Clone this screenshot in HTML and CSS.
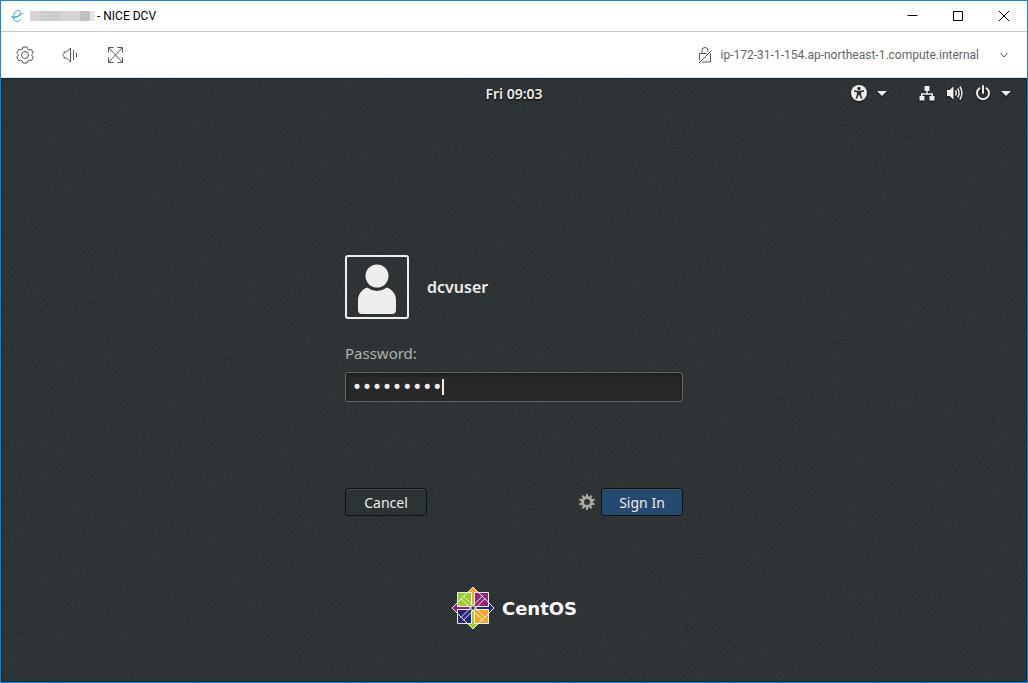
FILE: index.html
```
<!DOCTYPE html>
<html lang="en">
<head>
    <meta charset="UTF-8">
    <meta name="viewport" content="width=device-width, initial-scale=1.0">
    <title>NICE DCV</title>
    <link rel="stylesheet" href="styles.css">
</head>
<body>
    <header class="titlebar">
        <svg class="app-icon" viewBox="0 0 14 14" width="14" height="14">
            <path d="M3 8.5C7 8 10 6 9.5 3.5C9 .5 4.500.5 3 5C1.500 9.500 3.500 13 6.500 12.500C8 12.200 9 11.200 9.500 10M0 7.500C2 9 7 8 12.500 4"/>
        </svg>
        <span class="masked-name"><i></i><i></i><i></i><i></i><i></i></span>
        <span class="title">- NICE DCV</span>
        <div class="window-buttons">
            <button type="button" aria-label="Minimize"><svg viewBox="0 0 11 11" width="11" height="11"><path d="M.5 4.500h10"/></svg></button>
            <button type="button" aria-label="Maximize"><svg viewBox="0 0 11 11" width="11" height="11"><path d="M.5.5h9v9h-9z"/></svg></button>
            <button type="button" aria-label="Close"><svg viewBox="0 0 11 11" width="11" height="11"><path d="M0 0l10 10M10 0L0 10"/></svg></button>
        </div>
    </header>

    <nav class="toolbar">
        <button type="button" aria-label="Settings">
            <svg viewBox="0 0 18 18" width="18" height="18">
                <path d="M7 1h4l.8 2 1.400.8 2.100-.4 2 3.500-1.400 1.600v1l1.400 1.600-2 3.500-2.100-.4-1.400.8L11 17H7l-.8-2-1.400-.8-2.100.4-2-3.500 1.400-1.600v-1L.7 6.900l2-3.500 2.100.4L6.200 3z"/>
                <circle cx="9" cy="9" r="3.500"/>
            </svg>
        </button>
        <button type="button" aria-label="Sound">
            <svg viewBox="0 0 18 18" width="18" height="18">
                <path d="M3 6h2.500L9.500 2v14l-4-4H3V10.500L2 9.500v-1L3 7.500zM12.500 4v10M15.500 6.500v5"/>
            </svg>
        </button>
        <button type="button" aria-label="Fullscreen">
            <svg viewBox="0 0 18 18" width="18" height="18">
                <path d="M2.500 6.500v-5h5M11.500 1.500h5v5M16.500 11.500v5h-5M7.500 16.500h-5v-5M2.500 1.500l14 15M16.500 1.500l-14 15"/>
            </svg>
        </button>
        <div class="connection">
            <svg viewBox="0 0 16 18" width="16" height="18">
                <path d="M2.500 7.500h11v8.500h-11zM5 7.500V4.500a3 3 0 0 1 6 0v3"/>
                <path class="halo" d="M2 17L14.500 4.500"/>
                <path class="slash" d="M2 17L14.500 4.500"/>
            </svg>
            <span>ip-172-31-1-154.ap-northeast-1.compute.internal</span>
            <button type="button" aria-label="Connection menu"><svg viewBox="0 0 8 6" width="8" height="6"><path d="M.5 1L4 5 7.500 1"/></svg></button>
        </div>
    </nav>

    <main class="screen">
        <svg class="grain" aria-hidden="true">
            <filter id="grain" x="0" y="0" width="100%" height="100%">
                <feTurbulence type="fractalNoise" baseFrequency="0.7" numOctaves="2" seed="4"/>
                <feColorMatrix values="0 0 0 0 0.8  0 0 0 0 0.85  0 0 0 0 0.85  0.5 0.5 0 0 -0.42"/>
            </filter>
            <rect width="100%" height="100%" filter="url(#grain)"/>
        </svg>

        <div class="panel">
            <time class="clock">Fri 09:03</time>
            <div class="tray">
                <button type="button" aria-label="Accessibility">
                    <svg viewBox="0 0 16 16" width="16" height="16">
                        <circle cx="8" cy="8" r="8"/>
                        <circle class="cut" cx="8" cy="3.500" r="1.700"/>
                        <path class="cut" d="M3 5l3.800.8h2.400L13 5v1.500l-3 1 .3 2.500 1.200 3.800H10L8.300 10h-.6L6 13.800H4.500L5.700 10 6 7.500l-3-1z"/>
                    </svg>
                    <svg viewBox="0 0 10 5" width="10" height="5"><path d="M0 0h10L5 5z"/></svg>
                </button>
                <button type="button" aria-label="System">
                    <svg viewBox="0 0 16 16" width="16" height="16">
                        <path d="M5.500 1h5v5h-5zM7.300 6h1.400v2.300H14V11h1.500v4.500h-5V11h2V9.700h-9V11h2v4.500h-5V11H2V8.300h5.300z"/>
                    </svg>
                    <svg viewBox="0 0 16 16" width="16" height="16">
                        <path d="M0 5h2.500L6.500 1.500v13L2.500 11H0z"/>
                        <path class="wave" d="M8.500 5.500Q10 8 8.500 10.500M10.700 3.500Q13.500 8 10.700 12.500M12.900 1.500Q17 8 12.900 14.500"/>
                    </svg>
                    <svg viewBox="0 0 16 16" width="16" height="16">
                        <path class="power" d="M8 1v7M4.500 3.300a6 6 0 1 0 7 0"/>
                    </svg>
                    <svg viewBox="0 0 10 5" width="10" height="5"><path d="M0 0h10L5 5z"/></svg>
                </button>
            </div>
        </div>

        <form class="login">
            <div class="user">
                <span class="avatar">
                    <svg viewBox="0 0 60 60" width="60" height="60">
                        <circle cx="30" cy="19" r="11.500"/>
                        <path d="M20 30.500Q30 37.500 40 30.500C46 33 49 38 49 43v10q0 4-4 4H15q-4 0-4-4V43c0-5 3-10 9-12.500z"/>
                    </svg>
                </span>
                <span class="user-name">dcvuser</span>
            </div>
            <label for="password">Password:</label>
            <div class="field">
                <input type="password" id="password" name="password" value="123456789">
                <span class="caret"></span>
            </div>
            <div class="actions">
                <button type="button" class="button">Cancel</button>
                <button type="button" class="session" aria-label="Session">
                    <svg viewBox="-8 -8 16 16" width="16" height="16">
                        <circle r="4.500"/>
                        <path d="M0-8v3M0 8V5M-4.700-6.500l1.800 2.400M4.700-6.500L2.900-4.100M-4.700 6.500l1.800-2.400M4.700 6.500L2.900 4.100M-7.600-2.500l2.800 1M7.600-2.500l-2.800 1M-7.600 2.500l2.800-1M7.600 2.500l-2.800-1"/>
                    </svg>
                </button>
                <button type="button" class="button primary">Sign In</button>
            </div>
        </form>

        <div class="brand">
            <svg viewBox="-22 -22 44 44" width="44" height="44">
                <g stroke="#eee" stroke-width="1">
                    <path fill="#9ccd2a" d="M-15.500-15.500H0V0h-15.500z"/>
                    <path fill="#932279" d="M0-15.500h15.500V0H0z"/>
                    <path fill="#262577" d="M-15.500 0H0v15.500h-15.500z"/>
                    <path fill="#efa724" d="M0 0h15.500v15.500H0z"/>
                    <path fill="#efa724" d="M0-21l5.500 5.500H1.500V-3h-3v-12.500h-4z"/>
                    <path fill="#262577" d="M21 0l-5.500 5.500V1.500H3v-3h12.500v-4z"/>
                    <path fill="#9ccd2a" d="M0 21l-5.500-5.500h4V3h3v12.500h4z"/>
                    <path fill="#932279" d="M-21 0l5.500-5.500v4H-3v3h-12.500v4z"/>
                    <path fill="none" d="M0-21L21 0 0 21-21 0z"/>
                    <path fill="none" d="M-2-4.500l-8-8M-4.500-2l-8-8M2-4.500l8-8M4.500-2l8-8M-2 4.500l-8 8M-4.500 2l-8 8M2 4.500l8 8M4.500 2l8 8"/>
                </g>
                <path fill="#333" stroke="#eee" d="M-2-2h4v4h-4z"/>
            </svg>
            <span>CentOS</span>
        </div>
    </main>
</body>
</html>
```
FILE: styles.css
```
* {
    box-sizing: border-box;
}

body {
    margin: 0;
    min-height: 100vh;
    display: flex;
    flex-direction: column;
    border: 1px solid #1883d7;
    background-color: white;
    font-family: "Noto Sans", sans-serif;
}

button {
    display: flex;
    align-items: center;
    justify-content: center;
    padding: 0;
    border: none;
    background: none;
    font-family: inherit;
}

svg {
    display: block;
    flex: none;
}

/* Window frame */
.titlebar {
    display: flex;
    align-items: center;
    height: 31px;
    padding-left: 10px;
    border-bottom: 1px solid #c8c8c8;
    color: #000;
}

.app-icon {
    fill: none;
    stroke: #35a4d4;
}

.masked-name {
    display: flex;
    height: 10px;
    margin: 0 2px 0 5px;
}

.masked-name i {
    width: 10px;
    background-color: #d9d5d2;
}

.masked-name i:nth-child(2) {
    width: 20px;
    background-color: #cacecf;
}

.masked-name i:nth-child(3) {
    width: 20px;
    background-color: #d4d4d4;
}

.masked-name i:nth-child(4) {
    background-color: #bfc1c4;
}

.masked-name i:nth-child(5) {
    width: 5px;
    background-color: #e4e4e5;
}

.title {
    font-family: Roboto, sans-serif;
    font-size: 12px;
}

.window-buttons {
    display: flex;
    margin-left: auto;
}

.window-buttons button {
    width: 46px;
    height: 30px;
}

.window-buttons svg {
    fill: none;
    stroke: #000;
}

.toolbar {
    display: flex;
    align-items: center;
    gap: 27px;
    height: 46px;
    padding: 0 19px 0 15px;
    border-bottom: 1px solid #dde2e5;
}

.toolbar svg {
    fill: none;
    stroke: #555;
}

.connection {
    display: flex;
    align-items: center;
    gap: 8px;
    margin-left: auto;
    color: #666;
    font-family: Roboto, sans-serif;
    font-size: 12px;
}

.connection .halo {
    stroke: white;
    stroke-width: 3;
}

.connection button {
    margin-left: 13px;
}

/* Remote desktop */
.screen {
    position: relative;
    flex: 1;
    display: flex;
    flex-direction: column;
    align-items: center;
    border: 1px solid #0b2b40;
    background-color: #2b3133;
    color: #eeeeec;
}

.grain {
    position: absolute;
    inset: 0;
    width: 100%;
    height: 100%;
    opacity: 0.2;
}

.panel,
.login,
.brand {
    position: relative;
}

.panel {
    display: grid;
    grid-template-columns: 1fr auto 1fr;
    align-items: center;
    width: 100%;
    height: 28px;
    padding: 0 15px;
}

.clock {
    grid-column: 2;
    font-size: 14px;
    font-weight: 600;
    text-shadow: 0 1px 2px #000;
}

.tray {
    display: flex;
    justify-content: flex-end;
    gap: 32px;
}

.tray button {
    gap: 12px;
}

.tray button svg:last-child {
    margin-left: -2px;
}

.tray svg {
    fill: #eeeeec;
    filter: drop-shadow(0 1px 1px #111);
}

.tray .cut {
    fill: #2c3234;
}

.tray .wave,
.tray .power {
    fill: none;
    stroke: #eeeeec;
    stroke-width: 1.5;
}

.tray .power {
    stroke-width: 2;
    stroke-linecap: round;
}

.login {
    display: flex;
    flex-direction: column;
    width: 338px;
    margin-top: 148px;
}

.user {
    display: flex;
    align-items: center;
    gap: 18px;
}

.avatar {
    border: 2px solid #eeeeec;
    border-radius: 3px;
}

.avatar svg {
    fill: #eeeeec;
}

.user-name {
    font-size: 16px;
    font-weight: 600;
}

.login label {
    margin: 24px 0 8px;
    color: #b0b1ab;
    font-size: 15px;
    line-height: 21px;
}

.field {
    display: flex;
    align-items: center;
    height: 30px;
    padding-left: 6px;
    border: 1px solid #666864;
    border-radius: 3px;
    background-color: #282828;
    box-shadow: inset 0 2px 3px #1c1c1c;
}

.field input {
    width: 90px;
    padding: 0;
    border: none;
    outline: none;
    background: none;
    color: #eeeeec;
    font-family: "DejaVu Sans", sans-serif;
    font-size: 17px;
}

.caret {
    width: 2px;
    height: 16px;
    background-color: #eeeeec;
}

.actions {
    display: flex;
    align-items: center;
    gap: 6px;
    margin-top: 86px;
}

.button {
    width: 82px;
    height: 28px;
    border: 1px solid #0e1213;
    border-radius: 3px;
    background-color: #2c3335;
    box-shadow: inset 0 1px #454b4c;
    color: #eeeeec;
    font-size: 14px;
}

.primary {
    background-color: #25496f;
    box-shadow: inset 0 1px #45535b;
}

.session {
    margin-left: auto;
}

.session svg {
    fill: none;
    stroke: #aaa89c;
    stroke-width: 2;
}

.session circle {
    stroke-width: 3;
}

.brand {
    display: flex;
    align-items: center;
    gap: 7px;
    margin-top: 70px;
    color: white;
    font-family: "DejaVu Sans", sans-serif;
    font-size: 18px;
    font-weight: bold;
}
```
